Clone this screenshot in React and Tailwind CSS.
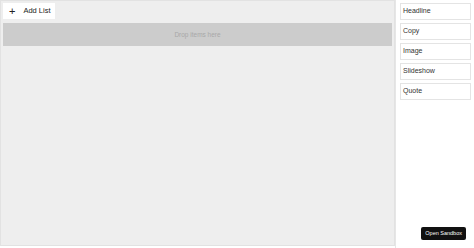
import React from 'react';

const blocks = ['Headline', 'Copy', 'Image', 'Slideshow', 'Quote'];

export default function App() {
  return (
    <div className="flex h-[248px] w-[474px] bg-white font-['Liberation_Sans',Arial,sans-serif]">
      {/* board */}
      <div className="flex-1 flex flex-col gap-[4px] bg-[#eeeeee] border border-[#e2e2e2] p-[2px] mb-[2px]">
        <div className="flex">
          <button className="flex items-center h-[16px] w-[52px] bg-white pl-[6px] text-[7.5px] text-[#222]">
            <span className="text-[11px] leading-none mr-[8px] font-light">+</span>
            Add List
          </button>
        </div>
        <div className="h-[23px] bg-[#cccccc] flex items-center justify-center text-[6.5px] text-[#a8a8a8]">
          Drop items here
        </div>
      </div>

      {/* sidebar */}
      <div className="w-[79px] flex flex-col border-l border-[#e6e6e6] pl-[4px] pr-[3px] pt-[3px] pb-[8px]">
        <div className="flex flex-col gap-[3px]">
          {blocks.map((b) => (
            <div
              key={b}
              className="h-[17px] flex items-center px-[2px] border border-[#e4e4e4] bg-white text-[7px] text-[#333]"
            >
              {b}
            </div>
          ))}
        </div>
        <div className="mt-auto flex justify-end pr-[5px]">
          <button className="h-[13px] px-[4px] rounded-[2px] bg-[#111111] text-white text-[5.5px]">
            Open Sandbox
          </button>
        </div>
      </div>
    </div>
  );
}
